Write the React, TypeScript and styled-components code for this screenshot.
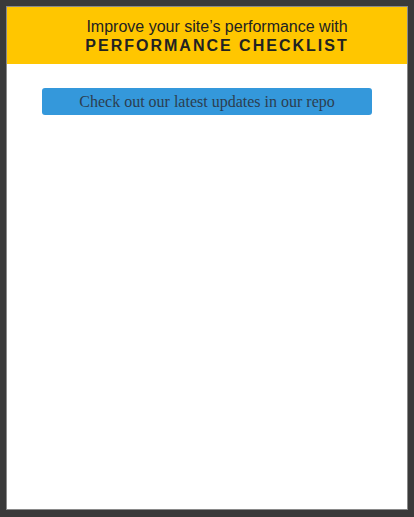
import styled, { createGlobalStyle } from 'styled-components'

const GlobalStyle = createGlobalStyle`
  html, body {
    margin: 0;
    padding: 0;
    background: #3a3a3a;
  }
  body {
    padding: 6px 6px 7px 6px;
  }
`

const Panel = styled.div`
  width: 400px;
  height: 502px;
  background: #fff;
  border: 1px solid #8a8a8a;
  display: flex;
  flex-direction: column;
`

const Header = styled.div`
  height: 57px;
  background: #ffc600;
  display: flex;
  flex-direction: column;
  align-items: center;
  justify-content: center;
  padding-left: 20px;
  padding-top: 1px;
  box-sizing: border-box;
  font-family: Arial, 'Liberation Sans', sans-serif;
  color: #222;
`

const Lead = styled.div`
  font-size: 16px;
  line-height: 19px;
`

const Title = styled.div`
  font-size: 16px;
  line-height: 19px;
  font-weight: bold;
  letter-spacing: 2px;
`

const Body = styled.div`
  display: flex;
  justify-content: center;
  padding-top: 24px;
`

const RepoButton = styled.a`
  width: 330px;
  height: 27px;
  display: flex;
  align-items: center;
  justify-content: center;
  background: #3498db;
  border-radius: 3px;
  font-family: 'Times New Roman', 'Liberation Serif', serif;
  font-size: 16px;
  color: #2c3e50;
  text-decoration: none;
`

export default function App() {
  return (
    <>
      <GlobalStyle />
      <Panel>
        <Header>
          <Lead>Improve your site’s performance with</Lead>
          <Title>PERFORMANCE CHECKLIST</Title>
        </Header>
        <Body>
          <RepoButton href="#">Check out our latest updates in our repo</RepoButton>
        </Body>
      </Panel>
    </>
  )
}
